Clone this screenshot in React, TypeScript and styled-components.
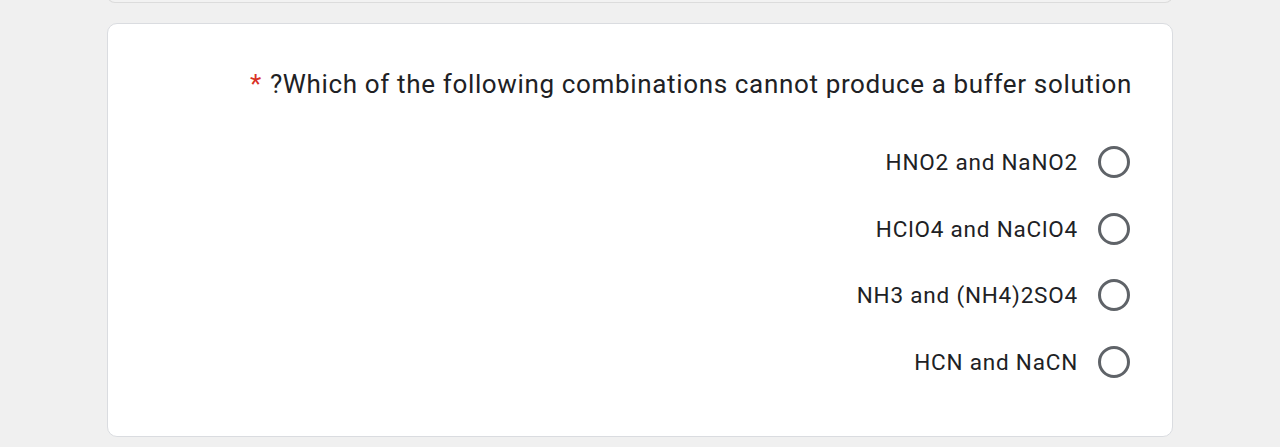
import React from "react";
import styled, { createGlobalStyle } from "styled-components";

const Global = createGlobalStyle`
  html, body { margin: 0; padding: 0; background: #f0f0f0; }
  body { font-family: Roboto, "Liberation Sans", Arial, sans-serif; color: #202124; }
`;

const Page = styled.div`
  display: flex;
  flex-direction: column;
  gap: 20px;
  padding: 0 107px;
  width: 1280px;
  box-sizing: border-box;
`;

const PrevCard = styled.div`
  height: 10px;
  margin-top: -8px;
  background: #f2f2f2;
  border: 1px solid #dcdcdc;
  border-top: none;
  border-radius: 0 0 8px 8px;
`;

const Card = styled.div`
  background: #ffffff;
  border: 1px solid #dadce0;
  border-radius: 10px;
  height: 414px;
  box-sizing: border-box;
  padding: 44px 40px 0 40px;
  display: flex;
  flex-direction: column;
  align-items: flex-end;
`;

const Question = styled.div`
  font-size: 26px;
  line-height: 32px;
  letter-spacing: 0.65px;
  color: #202124;
  display: flex;
  gap: 8px;
`;

const Star = styled.span`
  color: #d93025;
`;

const Options = styled.div`
  margin-top: 46px;
  padding-right: 2px;
  display: flex;
  flex-direction: column;
  gap: 34.7px;
  align-items: flex-end;
`;

const Option = styled.label`
  display: flex;
  align-items: center;
  gap: 20px;
  font-size: 22.5px;
  letter-spacing: 0.8px;
  line-height: 32px;
  color: #202124;
`;

const Radio = styled.span`
  width: 32px;
  height: 32px;
  box-sizing: border-box;
  border: 3px solid #5f6368;
  border-radius: 50%;
  display: inline-block;
`;

const options = ["HNO2 and NaNO2", "HClO4 and NaClO4", "NH3 and (NH4)2SO4", "HCN and NaCN"];

export default function App() {
  return (
    <>
      <Global />
      <Page>
        <PrevCard />
        <Card>
          <Question>
            <Star>*</Star>
            <span>?Which of the following combinations cannot produce a buffer solution</span>
          </Question>
          <Options>
            {options.map((o) => (
              <Option key={o}>
                <span>{o}</span>
                <Radio />
              </Option>
            ))}
          </Options>
        </Card>
      </Page>
    </>
  );
}
